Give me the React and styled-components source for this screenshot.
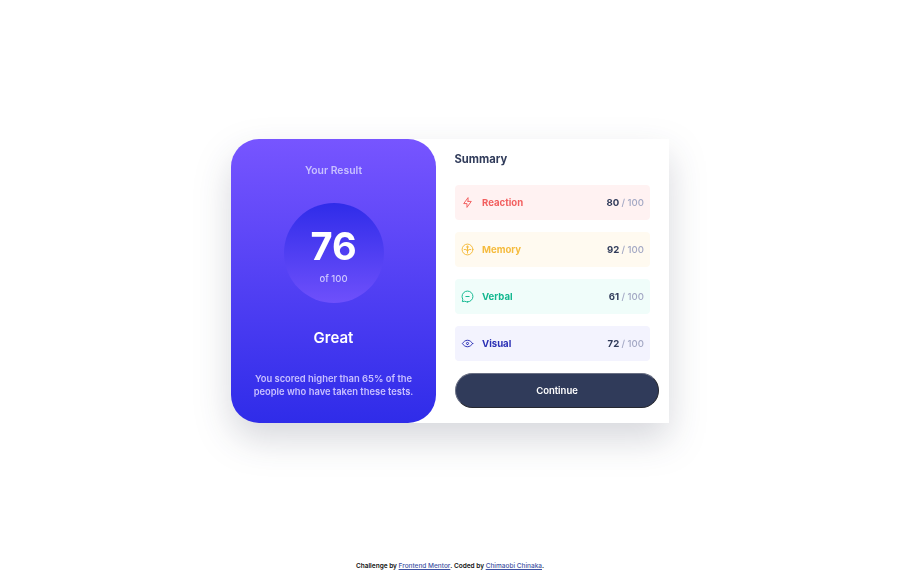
import React from 'react';
import styled, { createGlobalStyle } from 'styled-components';

const GlobalStyle = createGlobalStyle`
  html, body { margin: 0; padding: 0; background: #fff; }
  body { font-family: "Inter", "Noto Sans", sans-serif; }
`;

const Page = styled.div`
  height: 571px;
  display: flex;
  flex-direction: column;
  align-items: center;
  padding-top: 139px;
  box-sizing: border-box;
`;

const Card = styled.main`
  width: 438px;
  height: 284px;
  display: flex;
  filter: drop-shadow(0 16px 18px rgba(30, 35, 60, 0.18));
`;

const ResultPanel = styled.section`
  position: relative;
  width: 205px;
  flex: none;
  box-sizing: border-box;
  padding-top: 25px;
  display: flex;
  flex-direction: column;
  align-items: center;
  color: #fff;
  background: linear-gradient(180deg, #7755ff 0%, #2f2ce9 100%);
  border-radius: 28px;
`;

const ResultTitle = styled.h1`
  margin: 0;
  font-size: 10.4px;
  line-height: 14px;
  font-weight: 600;
  color: #c8c0ff;
`;

const ScoreCircle = styled.div`
  width: 100px;
  height: 100px;
  margin-top: 25px;
  border-radius: 50%;
  display: flex;
  flex-direction: column;
  align-items: center;
  background: linear-gradient(180deg, #2f2ce9 0%, rgba(114, 82, 252, 0.9) 100%);
`;

const Score = styled.span`
  margin-top: 21px;
  font-size: 38px;
  line-height: 44px;
  font-weight: 700;
`;

const ScoreMax = styled.span`
  margin-top: 4px;
  font-size: 9.5px;
  line-height: 13px;
  font-weight: 500;
  color: #cfc8ff;
`;

const Grade = styled.h2`
  margin: 25px 0 0;
  font-size: 15px;
  line-height: 19px;
  font-weight: 600;
`;

const Blurb = styled.p`
  margin: 25px 0 0;
  width: 170px;
  text-align: center;
  font-size: 9.4px;
  line-height: 13px;
  font-weight: 600;
  color: #c8c0ff;
`;

const SummaryPanel = styled.section`
  flex: 1;
  min-width: 0;
  margin-left: -29px;
  box-sizing: border-box;
  padding: 13px 0 0 48px;
  background: #fff;
`;

const SummaryTitle = styled.h2`
  margin: 0 0 18px -0.5px;
  font-size: 11.2px;
  line-height: 15px;
  font-weight: 700;
  color: #303b5a;
`;

const Rows = styled.ul`
  list-style: none;
  margin: 0;
  padding: 0;
  width: 195px;
  display: flex;
  flex-direction: column;
  gap: 12.5px;
`;

const Row = styled.li`
  height: 34.5px;
  box-sizing: border-box;
  padding: 0 6px;
  display: flex;
  align-items: center;
  border-radius: 4px;
  background: ${p => p.$bg};
  color: ${p => p.$color};
`;

const RowIcon = styled.svg`
  width: 13px;
  height: 13px;
  flex: none;
  fill: none;
  stroke: currentColor;
  stroke-width: 1.5;
  stroke-linecap: round;
  stroke-linejoin: round;
`;

const RowLabel = styled.span`
  margin-left: 8px;
  flex: 1;
  font-size: 9.6px;
  font-weight: 700;
`;

const RowValue = styled.span`
  font-size: 9.6px;
  font-weight: 700;
  color: #303b5a;
`;

const RowMax = styled.span`
  font-weight: 500;
  color: #a3a8c4;
`;

const ContinueButton = styled.button`
  display: block;
  width: 204px;
  height: 34.5px;
  margin-top: 12.5px;
  border: 1.5px outset #6a7084;
  border-radius: 18px;
  background: #303b5a;
  color: #fff;
  font-family: inherit;
  font-size: 9.5px;
  font-weight: 600;
`;

const Footer = styled.footer`
  margin-top: auto;
  font-size: 6.5px;
  line-height: 9px;
  font-weight: 600;
  color: #111;
`;

const FooterLink = styled.a`
  color: #3e52a3;
  font-weight: 500;
  text-decoration: underline;
`;

const icons = {
  reaction: <path d="M10.833 8.333V2.5l-6.666 9.167h5V17.5l6.666-9.167h-5Z" />,
  memory: (
    <>
      <circle cx="10" cy="10" r="8.3" />
      <path d="M10 4.5v11M10 7.5c-1 0-1.5-.7-1.5-1.5M10 7.5c1 0 1.5-.7 1.5-1.5M5 10h2.5c1 0 1.5.7 1.5 1.5M15 10h-2.5c-1 0-1.5.7-1.5 1.5" />
    </>
  ),
  verbal: (
    <path d="M7.5 10h5M10 18.333A8.333 8.333 0 1 0 1.667 10c0 1.518.406 2.942 1.115 4.167l-.699 3.75 3.75-.699A8.295 8.295 0 0 0 10 18.333Z" />
  ),
  visual: (
    <>
      <path d="M10 11.667a1.667 1.667 0 1 0 0-3.334 1.667 1.667 0 0 0 0 3.334Z" />
      <path d="M17.917 10c-1.573 2.5-4.398 5-7.917 5s-6.344-2.5-7.917-5C3.998 7.667 6.24 5 10 5s6.002 2.667 7.917 5Z" />
    </>
  ),
};

const results = [
  { label: 'Reaction', icon: 'reaction', score: 80, color: '#f25f5f', bg: '#fff2f2' },
  { label: 'Memory', icon: 'memory', score: 92, color: '#f5bb3d', bg: '#fffaf0' },
  { label: 'Verbal', icon: 'verbal', score: 61, color: '#14b890', bg: '#f0fdfa' },
  { label: 'Visual', icon: 'visual', score: 72, color: '#2a2fb5', bg: '#f3f3fe' },
];

export default function App() {
  return (
    <>
      <GlobalStyle />
      <Page>
        <Card>
          <ResultPanel>
            <ResultTitle>Your Result</ResultTitle>
            <ScoreCircle>
              <Score>76</Score>
              <ScoreMax>of 100</ScoreMax>
            </ScoreCircle>
            <Grade>Great</Grade>
            <Blurb>You scored higher than 65% of the people who have taken these tests.</Blurb>
          </ResultPanel>
          <SummaryPanel>
            <SummaryTitle>Summary</SummaryTitle>
            <Rows>
              {results.map(r => (
                <Row key={r.label} $bg={r.bg} $color={r.color}>
                  <RowIcon viewBox="0 0 20 20">{icons[r.icon]}</RowIcon>
                  <RowLabel>{r.label}</RowLabel>
                  <RowValue>{r.score} <RowMax>/ 100</RowMax></RowValue>
                </Row>
              ))}
            </Rows>
            <ContinueButton>Continue</ContinueButton>
          </SummaryPanel>
        </Card>
        <Footer>
          Challenge by <FooterLink href="#">Frontend Mentor</FooterLink>. Coded by <FooterLink href="#">Chimaobi Chinaka</FooterLink>.
        </Footer>
      </Page>
    </>
  );
}
